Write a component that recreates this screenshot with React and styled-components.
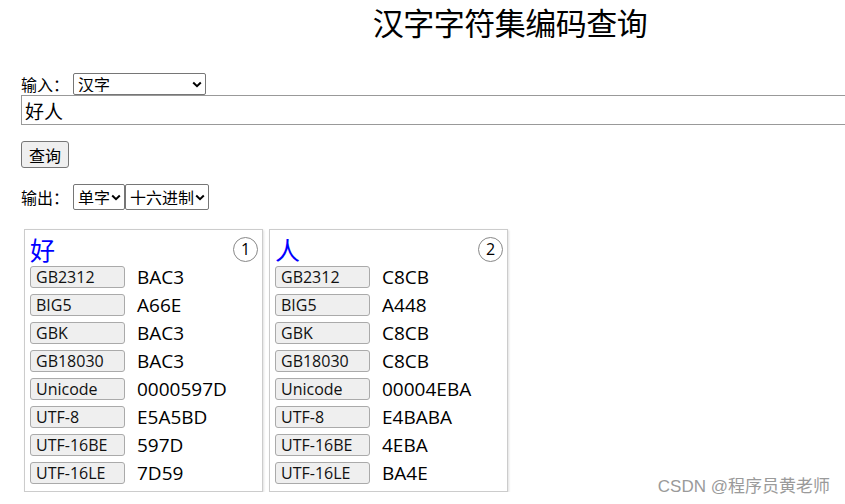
import styled, { createGlobalStyle } from 'styled-components';

const GlobalStyle = createGlobalStyle`
  html, body {
    margin: 0;
    padding: 0;
    background: #fff;
    overflow: hidden;
  }
  body {
    font-family: 'Liberation Sans', 'Noto Sans CJK SC', sans-serif;
    color: #000;
  }
`;

const chevron =
  "url(\"data:image/svg+xml;utf8,<svg xmlns='http://www.w3.org/2000/svg' width='10' height='7' viewBox='0 0 10 7'><path d='M1.2 1.5 L5 5.2 L8.8 1.5' fill='none' stroke='black' stroke-width='2'/></svg>\")";

const chars = [
  {
    ch: '好',
    codes: [
      ['GB2312', 'BAC3'],
      ['BIG5', 'A66E'],
      ['GBK', 'BAC3'],
      ['GB18030', 'BAC3'],
      ['Unicode', '0000597D'],
      ['UTF-8', 'E5A5BD'],
      ['UTF-16BE', '597D'],
      ['UTF-16LE', '7D59'],
    ],
  },
  {
    ch: '人',
    codes: [
      ['GB2312', 'C8CB'],
      ['BIG5', 'A448'],
      ['GBK', 'C8CB'],
      ['GB18030', 'C8CB'],
      ['Unicode', '00004EBA'],
      ['UTF-8', 'E4BABA'],
      ['UTF-16BE', '4EBA'],
      ['UTF-16LE', 'BA4E'],
    ],
  },
];

export default function App() {
  return (
    <>
      <GlobalStyle />
      <Page>
        <Title>汉字字符集编码查询</Title>
        <FormRow>
          <Label>输入：</Label>
          <Select $w={133} $h={22} $size={16} defaultValue="hz">
            <option value="hz">汉字</option>
          </Select>
        </FormRow>
        <TextInput defaultValue="好人" />
        <QueryBtn>查询</QueryBtn>
        <OutputRow>
          <Label>输出：</Label>
          <Select $w={52} $h={26} $size={16}>
            <option>单字</option>
          </Select>
          <Select $w={84} $h={26} $size={16}>
            <option>十六进制</option>
          </Select>
        </OutputRow>
        <Cards>
          {chars.map((c, i) => (
            <Card key={c.ch}>
              <CardHead>
                <BigChar>{c.ch}</BigChar>
                <Num>{i + 1}</Num>
              </CardHead>
              <Rows>
                {c.codes.map(([name, val]) => (
                  <Row key={name}>
                    <CodeName>{name}</CodeName>
                    <CodeValue>{val}</CodeValue>
                  </Row>
                ))}
              </Rows>
            </Card>
          ))}
        </Cards>
      </Page>
      <Watermark>CSDN @程序员黄老师</Watermark>
    </>
  );
}

const Page = styled.div`
  width: 978px;
  padding-left: 21px;
`;

const Title = styled.h1`
  margin: 0;
  padding-top: 4px;
  height: 66px;
  line-height: 36px;
  text-align: center;
  font-size: 31px;
  font-weight: normal;
  font-family: 'Noto Sans CJK SC', sans-serif;
  letter-spacing: -0.5px;
`;

const FormRow = styled.div`
  display: flex;
  align-items: center;
  height: 22px;
  margin-top: 3px;
`;

const Label = styled.span`
  width: 52px;
  font-size: 16px;
  font-family: 'Noto Sans CJK SC', sans-serif;
`;

const Select = styled.select`
  appearance: none;
  box-sizing: border-box;
  width: ${(p) => p.$w}px;
  height: ${(p) => p.$h}px;
  margin: 0;
  padding: 0 14px 0 4px;
  font-size: ${(p) => p.$size}px;
  line-height: 1;
  font-family: 'Noto Sans CJK SC', sans-serif;
  color: #000;
  border: 1px solid #767676;
  border-radius: 2px;
  background: #fff ${chevron} no-repeat right 3px center;
`;

const TextInput = styled.input`
  display: block;
  box-sizing: border-box;
  width: 100%;
  height: 30px;
  margin: 0;
  border: 1px solid #999;
  padding: 0 3px;
  font-size: 19px;
  font-family: 'Noto Sans CJK SC', sans-serif;
  outline: none;
`;

const QueryBtn = styled.button`
  display: block;
  margin-top: 16px;
  width: 48px;
  height: 27px;
  padding: 0;
  font-size: 16px;
  font-family: 'Noto Sans CJK SC', sans-serif;
  background: #efefef;
  border: 1px solid #767676;
  border-radius: 3px;
`;

const OutputRow = styled.div`
  display: flex;
  align-items: center;
  margin-top: 16px;
  height: 26px;
`;

const Cards = styled.div`
  display: flex;
  gap: 6px;
  margin-top: 19px;
  padding-left: 3px;
`;

const Card = styled.div`
  width: 239px;
  box-sizing: border-box;
  border: 1px solid #ccc;
  box-shadow: 1px 1px 2px rgba(0, 0, 0, 0.12);
  padding: 4px 4px 7px 5px;
`;

const CardHead = styled.div`
  display: flex;
  justify-content: space-between;
  align-items: center;
  height: 30px;
  margin-bottom: 2px;
`;

const BigChar = styled.span`
  color: #0000ff;
  font-size: 25px;
  line-height: 30px;
  font-family: 'Noto Sans CJK SC', sans-serif;
`;

const Num = styled.span`
  box-sizing: border-box;
  width: 25px;
  height: 25px;
  border: 1px solid #888;
  border-radius: 50%;
  display: flex;
  align-items: center;
  justify-content: center;
  font-size: 16px;
  font-family: 'Open Sans', sans-serif;
`;

const Rows = styled.div`
  display: flex;
  flex-direction: column;
  gap: 6px;
`;

const Row = styled.div`
  display: flex;
  align-items: center;
  height: 22px;
  gap: 12px;
`;

const CodeName = styled.span`
  box-sizing: border-box;
  width: 95px;
  height: 22px;
  line-height: 20px;
  padding-left: 5px;
  background: #efefef;
  border: 1px solid #aaa;
  border-radius: 3px;
  font-size: 16px;
  font-family: 'Open Sans', sans-serif;
  color: #111;
`;

const CodeValue = styled.span`
  font-size: 19px;
  font-family: 'Open Sans', sans-serif;
  color: #000;
`;

const Watermark = styled.div`
  position: absolute;
  right: 15px;
  top: 472px;
  font-size: 17px;
  color: #9a9a9a;
  font-family: 'Liberation Sans', 'Noto Sans CJK SC', sans-serif;
`;
